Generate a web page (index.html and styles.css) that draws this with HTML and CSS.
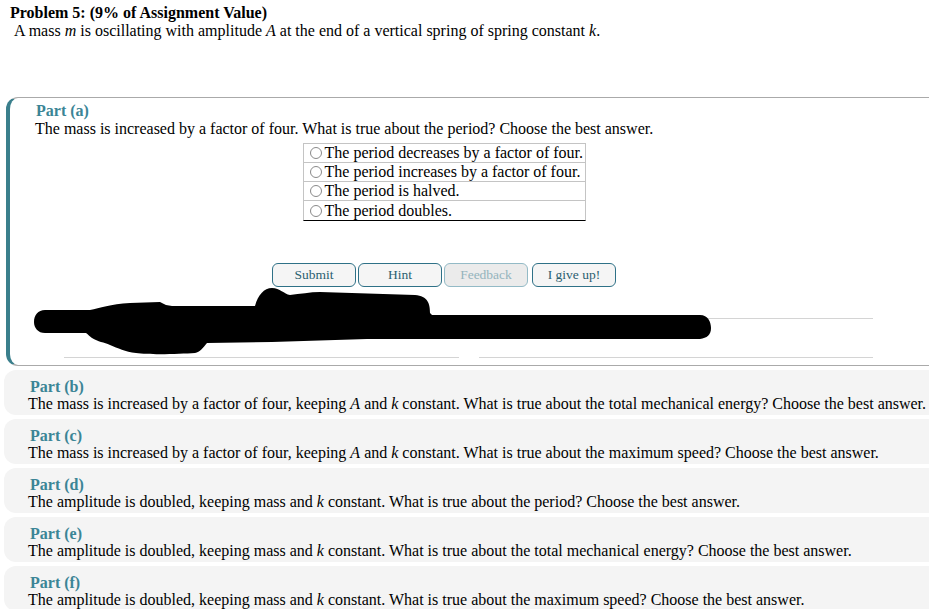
FILE: index.html
```html
<!DOCTYPE html>
<html>
<head>
<meta charset="utf-8">
<link rel="stylesheet" href="styles.css">
</head>
<body>
<div class="problem">
  <div class="title">Problem 5: (9% of Assignment Value)</div>
  <div class="intro">A mass <i>m</i> is oscillating with amplitude <i>A</i> at the end of a vertical spring of spring constant <i>k</i>.</div>
</div>

<div class="part-active">
  <div class="part-label">Part (a)</div>
  <div class="part-text">The mass is increased by a factor of four. What is true about the period? Choose the best answer.</div>
  <div class="center">
    <div class="options">
      <label class="opt"><span class="radio"></span>The period decreases by a factor of four.</label>
      <label class="opt"><span class="radio"></span>The period increases by a factor of four.</label>
      <label class="opt"><span class="radio"></span>The period is halved.</label>
      <label class="opt"><span class="radio"></span>The period doubles.</label>
    </div>
  </div>
  <div class="center buttons">
    <button class="btn">Submit</button>
    <button class="btn">Hint</button>
    <button class="btn disabled">Feedback</button>
    <button class="btn">I give up!</button>
  </div>
  <div class="rule-row first">
    <div class="rule"></div>
  </div>
  <div class="rule-row two">
    <div class="rule"></div>
    <div class="rule"></div>
  </div>
  <svg class="redact" width="720" height="80" viewBox="0 0 720 80">
    <path d="M45 30 L90 30 C100 28 110 24 130 23 L160 22 L166 25 L172 26 L255 26 C258 15 264 8 272 8 C280 8 284 14 290 15 C300 14 310 12 320 12 L415 15 C428 16 430 24 430 33 L432 35 L700 35 C708 35 711 42 711 48 C711 55 707 58 700 59 L367 59 L272 62 L207 63 C203 68 200 72 195 73 C180 74 150 75 136 73 C125 72 118 68 110 65 C104 62 98 62 92 58 C89 56 88 54 86 53 L45 53 C38 53 34 48 34 42 C34 35 38 30 45 30 Z" fill="#000"/>
  </svg>
</div>

<div class="part">
  <div class="part-label">Part (b)</div>
  <div class="part-text">The mass is increased by a factor of four, keeping <i>A</i> and <i>k</i> constant. What is true about the total mechanical energy? Choose the best answer.</div>
</div>
<div class="part">
  <div class="part-label">Part (c)</div>
  <div class="part-text">The mass is increased by a factor of four, keeping <i>A</i> and <i>k</i> constant. What is true about the maximum speed? Choose the best answer.</div>
</div>
<div class="part">
  <div class="part-label">Part (d)</div>
  <div class="part-text">The amplitude is doubled, keeping mass and <i>k</i> constant. What is true about the period? Choose the best answer.</div>
</div>
<div class="part">
  <div class="part-label">Part (e)</div>
  <div class="part-text">The amplitude is doubled, keeping mass and <i>k</i> constant. What is true about the total mechanical energy? Choose the best answer.</div>
</div>
<div class="part">
  <div class="part-label">Part (f)</div>
  <div class="part-text">The amplitude is doubled, keeping mass and <i>k</i> constant. What is true about the maximum speed? Choose the best answer.</div>
</div>
</body>
</html>
```
FILE: styles.css
```css
html, body {
  margin: 0;
  padding: 0;
  background: #fff;
  overflow: hidden;
}
body {
  font-family: "Liberation Serif", "Times New Roman", serif;
  font-size: 16px;
  color: #000;
  width: 929px;
  height: 609px;
}
.problem {
  padding: 4px 0 0 10px;
}
.title {
  font-weight: bold;
  font-size: 16px;
  line-height: 18px;
}
.intro {
  padding-left: 4px;
  line-height: 18px;
}
.part-active {
  position: relative;
  margin: 57px 0 0 6px;
  height: 263px;
  border-top: 1px solid #aaa;
  border-bottom: 1px solid #aaa;
  border-left: 4px solid #3a7f8c;
  border-radius: 12px 0 0 12px;
  padding: 4px 76px 0 25px;
}
.part-label {
  color: #3b8596;
  font-weight: bold;
  font-size: 16px;
  line-height: 18px;
  padding-left: 1px;
}
.part-text {
  line-height: 18px;
}
.center {
  display: flex;
  justify-content: center;
}
.options {
  margin-top: 5px;
  width: 281px;
  border: 1px solid #c4c4c4;
  border-bottom: 1px solid #000;
}
.opt {
  display: flex;
  align-items: center;
  height: 18px;
  padding-left: 6px;
  border-bottom: 1px solid #c4c4c4;
  line-height: 18px;
}
.opt:last-child {
  border-bottom: none;
  height: 19px;
}
.radio {
  width: 10px;
  height: 10px;
  border: 1.5px solid #8a8a8a;
  border-radius: 50%;
  margin-right: 3px;
  flex: none;
}
.buttons {
  margin-top: 42px;
  gap: 2px;
}
.btn {
  width: 84px;
  height: 24px;
  border: 1px solid #2f7187;
  border-radius: 6px;
  background: #f5f5f5;
  font-family: "Liberation Serif", "Times New Roman", serif;
  font-size: 13.5px;
  color: #2b5f70;
  padding: 0;
}
.btn.disabled {
  border-color: #93bac6;
  background: #ebebeb;
  color: #95b4bd;
}
.btn:last-child {
  margin-left: 2px;
}
.rule-row {
  display: flex;
  gap: 20px;
  margin-left: 29px;
  width: 809px;
}
.rule-row .rule {
  flex: 1;
  height: 0;
  border-top: 1px solid #d4d4d4;
}
.rule-row.first {
  margin-top: 31px;
}
.rule-row.two {
  margin-top: 38px;
}
.redact {
  position: absolute;
  left: -10px;
  top: 182px;
}
.part {
  margin: 4px 0 0 4px;
  height: 45px;
  background: #f4f4f4;
  border-radius: 12px 0 0 12px;
  padding: 8px 0 0 24px;
  box-sizing: border-box;
}
.part .part-label {
  padding-left: 2px;
  line-height: 17px;
}
.part .part-text {
  line-height: 17px;
}
```
